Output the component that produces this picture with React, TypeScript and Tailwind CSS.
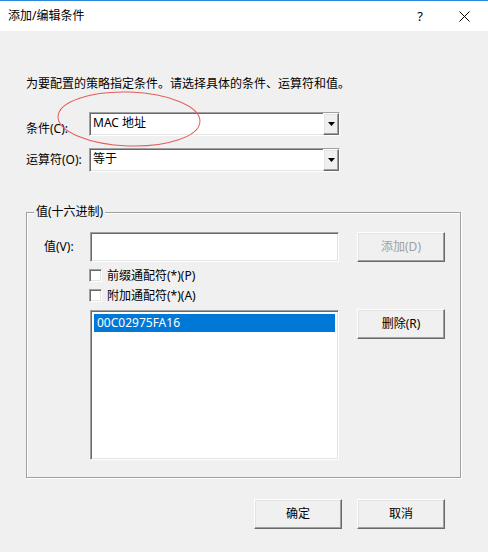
import React from 'react';

const font = "font-['Noto_Sans','Noto_Sans_CJK_SC',sans-serif]";
const sunken =
  'border border-t-[#a0a0a0] border-l-[#a0a0a0] border-b-white border-r-white shadow-[inset_1px_1px_0_#696969,inset_-1px_-1px_0_#e3e3e3]';
const raised =
  'border border-t-white border-l-white border-r-[#696969] border-b-[#696969] shadow-[inset_-1px_-1px_0_#a0a0a0,inset_1px_1px_0_#e3e3e3]';

const Combo: React.FC<{ value: string }> = ({ value }) => (
  <div className={`${sunken} flex h-[24px] w-[251px] bg-white`}>
    <div className="flex-1 pl-[3px] text-[12px] leading-[20px] text-black">{value}</div>
    <div className={`${raised} flex w-[16px] items-center justify-center bg-[#f0f0f0]`}>
      <svg width="7" height="4" viewBox="0 0 7 4">
        <path d="M0 0h7L3.5 4z" fill="#000" />
      </svg>
    </div>
  </div>
);

const Button: React.FC<{ label: string; disabled?: boolean }> = ({ label, disabled }) => (
  <button
    className={`${raised} h-[30px] w-[88px] bg-[#f0f0f0] text-[12px] leading-[16px] ${
      disabled ? 'text-[#a0a0a0]' : 'text-black'
    }`}
  >
    {label}
  </button>
);

const Check: React.FC<{ label: string }> = ({ label }) => (
  <div className="flex h-[13px] items-center gap-[5px]">
    <div className={`${sunken} h-[13px] w-[13px] bg-white`} />
    <span className="text-[12px] leading-[16px]">{label}</span>
  </div>
);

export default function App() {
  return (
    <div className={`${font} relative flex h-[552px] w-[488px] flex-col overflow-hidden bg-[#f0f0f0] text-black`}>
      {/* title bar */}
      <div className="flex h-[31px] items-center border-t border-[#2b88d8] bg-white pl-[8px]">
        <span className="flex-1 text-[12px] leading-[16px]">添加/编辑条件</span>
        <span className="mr-[36px] text-[13px] leading-[16px]">?</span>
        <svg width="11" height="11" viewBox="0 0 11 11" className="mr-[18px]">
          <path d="M0.5 0.5l10 10M10.5 0.5l-10 10" stroke="#000" strokeWidth="1" />
        </svg>
      </div>

      <div className="flex flex-1 flex-col pl-[26px]">
        <p className="mt-[44px] text-[12px] leading-[18px]">为要配置的策略指定条件。请选择具体的条件、运算符和值。</p>

        <div className="mt-[19px] flex items-start">
          <span className="mt-[8px] w-[63px] text-[12px] leading-[18px]">条件(C):</span>
          <Combo value="MAC 地址" />
        </div>
        <div className="mt-[10px] flex items-center">
          <span className="w-[63px] text-[12px] leading-[18px]">运算符(O):</span>
          <Combo value="等于" />
        </div>

        {/* group box */}
        <div className="relative mt-[40px] h-[266px] w-[435px] border border-[#a0a0a0] shadow-[inset_1px_1px_0_#fff,1px_1px_0_#fff] pl-[17px] pt-[19px]">
          <span className="absolute left-[7px] top-[-9px] bg-[#f0f0f0] px-[2px] text-[12px] leading-[16px]">值(十六进制)</span>

          <div className="flex items-center">
            <span className="w-[46px] text-[12px] leading-[16px]">值(V):</span>
            <div className={`${sunken} h-[30px] w-[249px] bg-white`} />
            <div className="ml-[18px]">
              <Button label="添加(D)" disabled />
            </div>
          </div>

          <div className="ml-[45px] mt-[7px] flex flex-col gap-[7px]">
            <Check label="前缀通配符(*)(P)" />
            <Check label="附加通配符(*)(A)" />
          </div>

          <div className="mt-[8px] flex items-start">
            <div className={`${sunken} ml-[46px] h-[150px] w-[249px] bg-white p-[3px]`}>
              <div className="h-[18px] bg-[#0078d7] pl-[3px] text-[12px] leading-[18px] text-white">00C02975FA16</div>
            </div>
            <div className="ml-[18px] mt-[-1px]">
              <Button label="删除(R)" />
            </div>
          </div>
        </div>

        <div className="mt-[21px] flex gap-[15px] pl-[228px]">
          <Button label="确定" />
          <Button label="取消" />
        </div>
      </div>

      {/* annotation */}
      <svg className="pointer-events-none absolute left-[56px] top-[90px]" width="148" height="60" viewBox="0 0 148 60">
        <ellipse cx="73" cy="29" rx="71" ry="27" transform="rotate(2 73 29)" fill="none" stroke="#e35d5d" strokeWidth="1" />
      </svg>
    </div>
  );
}
